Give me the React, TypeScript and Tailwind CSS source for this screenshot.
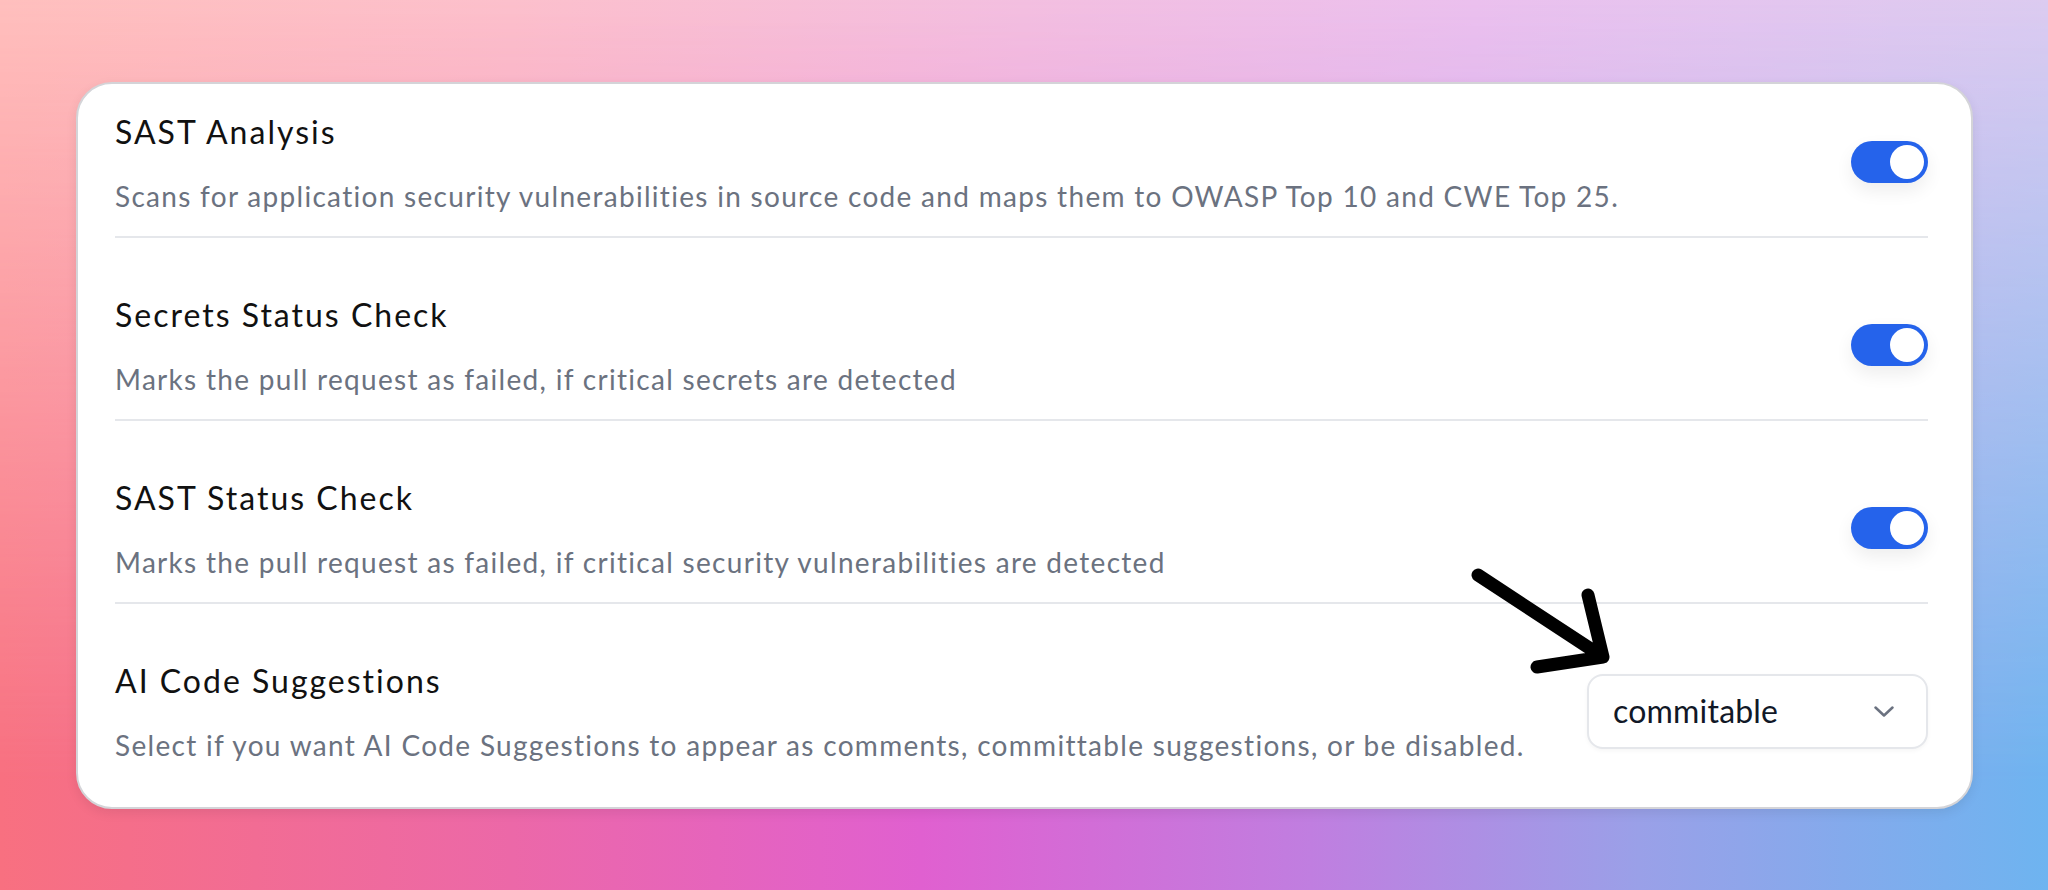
import React from 'react';

interface SettingRow {
  title: string;
  description: string;
  kind: 'toggle' | 'select';
}

const rows: SettingRow[] = [
  {
    title: 'SAST Analysis',
    description:
      'Scans for application security vulnerabilities in source code and maps them to OWASP Top 10 and CWE Top 25.',
    kind: 'toggle',
  },
  {
    title: 'Secrets Status Check',
    description: 'Marks the pull request as failed, if critical secrets are detected',
    kind: 'toggle',
  },
  {
    title: 'SAST Status Check',
    description: 'Marks the pull request as failed, if critical security vulnerabilities are detected',
    kind: 'toggle',
  },
  {
    title: 'AI Code Suggestions',
    description:
      'Select if you want AI Code Suggestions to appear as comments, committable suggestions, or be disabled.',
    kind: 'select',
  },
];

const Toggle = () => (
  <div className="flex h-[42px] w-[77px] shrink-0 items-center justify-end rounded-full bg-[#2563eb] p-[4px] shadow-[0_8px_18px_rgba(0,0,0,0.07)]">
    <div className="h-[34px] w-[34px] rounded-full bg-white" />
  </div>
);

const Select = () => (
  <div className="flex h-[75px] w-[341px] shrink-0 items-center justify-between rounded-[16px] border-2 border-[#e5e7eb] bg-white pl-[24px] pr-[32px] shadow-[0_2px_4px_rgba(0,0,0,0.04)]">
    <span className="text-[32px] leading-none tracking-[0.2px] text-[#111827]">commitable</span>
    <svg width="20" height="11" viewBox="0 0 20 11" fill="none">
      <path d="M1.5 1.5l8.5 8 8.5-8" stroke="#6b7280" strokeWidth="2.5" strokeLinecap="round" strokeLinejoin="round" />
    </svg>
  </div>
);

export default function App() {
  return (
    <div
      className="relative h-[890px] w-full overflow-hidden bg-[linear-gradient(to_right,#f87080,#ec68a8_25%,#e060d0_45%,#c07ee0_64%,#9aa0e8_80%,#6eb4f0)] px-[76px] pt-[82px] before:absolute before:inset-0 before:bg-[linear-gradient(to_right,#ffbfbd,#fcc0cc_25%,#f3bfe0_50%,#ebc0ee_72%,#dccbf0)] before:content-[''] before:[mask-image:linear-gradient(to_bottom,black_0%,transparent_88%)]"
      style={{ fontFamily: 'Lato, "Noto Sans", sans-serif' }}
    >
      <div className="relative w-[1897px] rounded-[36px] border-2 border-[#d4d4d8] bg-white pl-[37px] pr-[43px] shadow-[0_4px_12px_rgba(0,0,0,0.08)]">
        {rows.map((row, i) => (
          <div
            key={row.title}
            className={`flex items-center justify-between ${
              i === 0 ? 'pt-[24px]' : 'pt-[53px]'
            } ${i === rows.length - 1 ? 'pb-[42px]' : 'border-b-2 border-[#e5e7eb] pb-[20px]'}`}
          >
            <div className="flex flex-col">
              <div className="text-[32px] leading-[48px] tracking-[2px] text-[#111111]">{row.title}</div>
              <div className="mt-[20px] text-[28px] leading-[40px] tracking-[1.3px] text-[#6b7280]">
                {row.description}
              </div>
            </div>
            {row.kind === 'toggle' ? <Toggle /> : <Select />}
          </div>
        ))}

        {/* hand drawn arrow pointing at the select */}
        <svg
          className="pointer-events-none absolute left-[1382px] top-[476px]"
          width="170"
          height="130"
          viewBox="0 0 170 130"
          fill="none"
        >
          <path
            d="M18 15L143 97M128 35L143 97L77 107"
            stroke="#000"
            strokeWidth="13"
            strokeLinecap="round"
            strokeLinejoin="round"
          />
        </svg>
      </div>
    </div>
  );
}
